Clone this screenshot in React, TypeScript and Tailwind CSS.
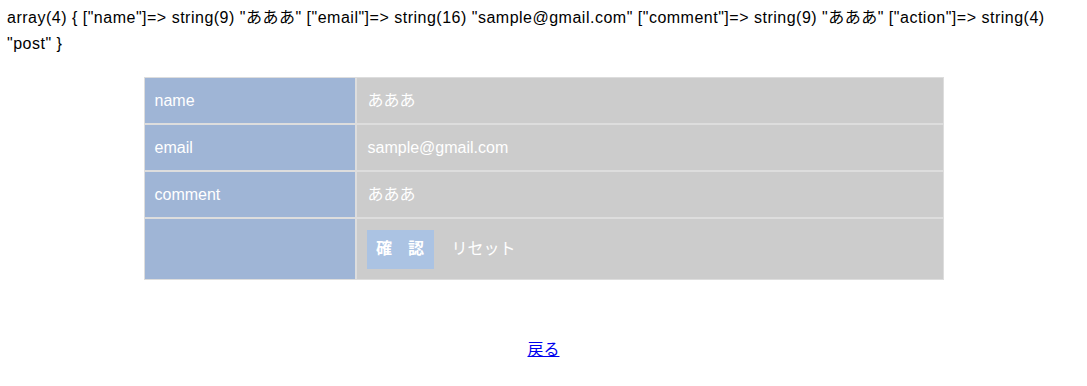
const dump =
  'array(4) { ["name"]=> string(9) "あああ" ["email"]=> string(16) "sample@gmail.com" ["comment"]=> string(9) "あああ" ["action"]=> string(4) "post" }';

export default function App() {
  const rows = [
    { label: "name", value: "あああ" },
    { label: "email", value: "sample@gmail.com" },
    { label: "comment", value: "あああ" },
  ];

  return (
    <div
      className="min-h-[386px] bg-white text-[16px] text-black"
      style={{ fontFamily: '"Liberation Sans", Arial, "Noto Sans CJK JP", sans-serif' }}
    >
      {/* var_dump の出力 */}
      <p className="w-[1062px] pl-[7px] pt-[5px] leading-[26px] tracking-[0.5px]">{dump}</p>

      {/* 確認テーブル */}
      <div className="mx-auto mt-[20px] grid w-[800px] grid-cols-[210px_1fr] gap-[2px] bg-[#dddddd] p-px text-white">
        {rows.map((row) => (
          <div key={row.label} className="contents">
            <div className="flex h-[45px] items-center bg-[#9fb5d6] px-[10px]">{row.label}</div>
            <div className="flex h-[45px] items-center bg-[#cccccc] px-[11px]">{row.value}</div>
          </div>
        ))}
        <div className="h-[60px] bg-[#9fb5d6]" />
        <div className="flex h-[60px] items-center gap-[18px] bg-[#cccccc] px-[10px]">
          <button className="h-[39px] w-[67px] bg-[#abc3e3] font-bold text-white">確　認</button>
          <span>リセット</span>
        </div>
      </div>

      <div className="mt-[58px] text-center leading-[24px]">
        <a href="#" className="text-[#0000ee] underline">
          戻る
        </a>
      </div>
    </div>
  );
}
